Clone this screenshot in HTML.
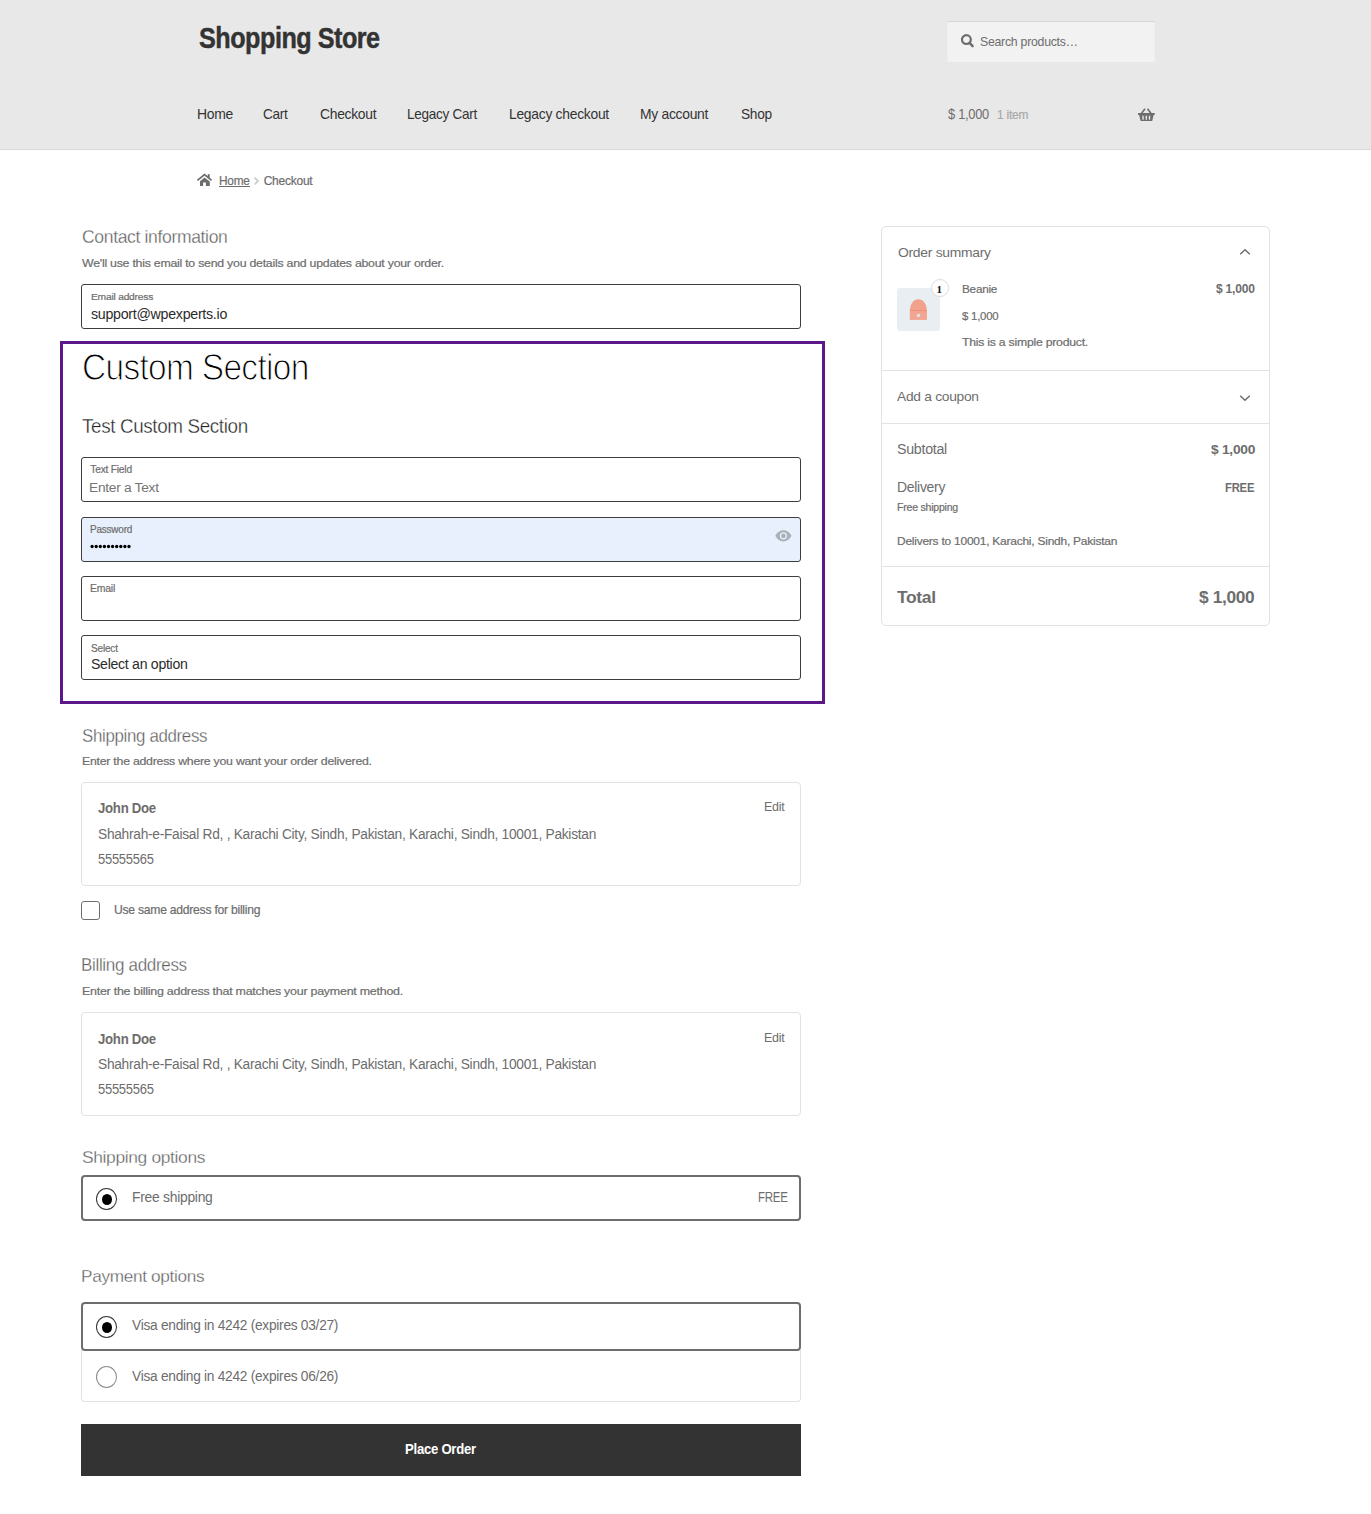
<!DOCTYPE html>
<html><head><meta charset="utf-8">
<style>
html,body{margin:0;padding:0;background:#fff;width:1371px;height:1514px;overflow:hidden;position:relative;font-family:"Liberation Sans",sans-serif;}
.t{position:absolute;white-space:nowrap;}
.b{position:absolute;box-sizing:border-box;}
svg{position:absolute;overflow:visible;}
</style></head><body>
<!-- header -->
<div class="b" style="left:0;top:0;width:1371px;height:150px;background:#e8e8e8;border-bottom:1px solid #dadada;"></div>
<div class="b" style="left:947px;top:21px;width:208px;height:41px;background:#f2f2f2;box-shadow:inset 0 1px 1px rgba(0,0,0,.12);"></div>
<!-- search icon -->
<svg style="left:960px;top:34px" width="15" height="15" viewBox="0 0 15 15"><circle cx="6.4" cy="5.6" r="4.4" fill="none" stroke="#6d6d6d" stroke-width="2.2"/><line x1="9.6" y1="8.9" x2="12.6" y2="12.1" stroke="#6d6d6d" stroke-width="2.5" stroke-linecap="round"/></svg>
<!-- basket icon -->
<svg style="left:1132px;top:102px" width="28" height="24" viewBox="0 0 28 24"><rect x="6.1" y="11" width="16.6" height="2" fill="#6d6d6d"/><path d="M7.1 12.9H21.6L20.2 18.9H8.6Z" fill="#6d6d6d"/><path d="M9.6 11.2L13 6.8M18.9 11.2L15.5 6.8" stroke="#6d6d6d" stroke-width="1.6" fill="none"/><rect x="10.3" y="13.7" width="1.4" height="4" fill="#e8e8e8"/><rect x="13.6" y="13.7" width="1.4" height="4" fill="#e8e8e8"/><rect x="16.8" y="13.7" width="1.4" height="4" fill="#e8e8e8"/></svg>
<!-- breadcrumb home icon -->
<svg style="left:194px;top:170px" width="24" height="20" viewBox="0 0 24 20"><path d="M3.4 10.4L10.5 4.5 17.6 10.4" stroke="#6d6d6d" stroke-width="1.7" fill="none"/><rect x="13.7" y="4.2" width="2" height="3.6" fill="#6d6d6d"/><path d="M6 11.2L10.5 7.6 15.8 11.4V15.9H11.9V12.6H9.1V15.9H6Z" fill="#6d6d6d"/></svg>
<div class="b" style="left:218.6px;top:186px;width:31.2px;height:1px;background:#6d6d6d;"></div>
<svg style="left:253px;top:176px" width="7" height="10" viewBox="0 0 7 10"><path d="M1.5 1.5L5 5 1.5 8.5" stroke="#c8c8c8" stroke-width="1.6" fill="none"/></svg>

<!-- contact email input -->
<div class="b" style="left:81px;top:284px;width:720px;height:45px;border:1px solid #3d3d3d;border-radius:3px;"></div>
<!-- custom section -->
<div class="b" style="left:60px;top:341px;width:765px;height:363px;border:3px solid #5c1888;"></div>
<div class="b" style="left:81px;top:457px;width:720px;height:45px;border:1px solid #3d3d3d;border-radius:3px;"></div>
<div class="b" style="left:81px;top:517px;width:720px;height:45px;border:1px solid #3d3d3d;border-radius:3px;background:#e8f0fe;"></div>
<div class="b" style="left:81px;top:576px;width:720px;height:45px;border:1px solid #3d3d3d;border-radius:3px;"></div>
<div class="b" style="left:81px;top:635px;width:720px;height:45px;border:1px solid #3d3d3d;border-radius:3px;"></div>
<!-- password dots -->
<svg style="left:90px;top:544px" width="42" height="5" viewBox="0 0 42 5">
<circle cx="2.1" cy="2.5" r="1.65" fill="#000"/><circle cx="6.2" cy="2.5" r="1.65" fill="#000"/><circle cx="10.3" cy="2.5" r="1.65" fill="#000"/><circle cx="14.4" cy="2.5" r="1.65" fill="#000"/><circle cx="18.5" cy="2.5" r="1.65" fill="#000"/><circle cx="22.6" cy="2.5" r="1.65" fill="#000"/><circle cx="26.7" cy="2.5" r="1.65" fill="#000"/><circle cx="30.8" cy="2.5" r="1.65" fill="#000"/><circle cx="34.9" cy="2.5" r="1.65" fill="#000"/><circle cx="39" cy="2.5" r="1.65" fill="#000"/></svg>
<!-- eye icon -->
<svg style="left:775px;top:530px" width="17" height="12" viewBox="0 0 17 12"><path d="M8.4 0.3C4.6 0.3 1.6 3 0.3 5.8c1.3 2.9 4.3 5.6 8.1 5.6s6.8-2.7 8.1-5.6C15.2 3 12.2 0.3 8.4 0.3z" fill="#aab1b8"/><circle cx="8.4" cy="5.8" r="3.6" fill="#e8f0fe"/><circle cx="8.4" cy="5.9" r="2.3" fill="#aab1b8"/></svg>

<!-- sidebar card -->
<div class="b" style="left:881px;top:226px;width:389px;height:400px;border:1px solid #e2e2e2;border-radius:5px;"></div>
<div class="b" style="left:882px;top:370px;width:387px;height:1px;background:#e2e2e2;"></div>
<div class="b" style="left:882px;top:423px;width:387px;height:1px;background:#e2e2e2;"></div>
<div class="b" style="left:882px;top:566px;width:387px;height:1px;background:#e2e2e2;"></div>
<svg style="left:1239px;top:248px" width="12" height="8" viewBox="0 0 12 8"><path d="M1.2 6.2L6 1.8l4.8 4.4" stroke="#6d6d6d" stroke-width="1.5" fill="none"/></svg>
<svg style="left:1239px;top:394px" width="12" height="8" viewBox="0 0 12 8"><path d="M1.2 1.8L6 6.2l4.8-4.4" stroke="#6d6d6d" stroke-width="1.5" fill="none"/></svg>
<div class="b" style="left:897px;top:288px;width:43px;height:43px;background:#e9eef3;border-radius:3px;"></div>
<!-- hat -->
<svg style="left:909px;top:299px" width="19" height="22" viewBox="0 0 19 22"><path d="M1 11.5C1 5 4.5 0.3 9.3 0.3S17.8 5 17.8 11.5z" fill="#f2a18c"/><rect x="0.8" y="11.3" width="17.2" height="9.6" fill="#f2a590"/><line x1="1" y1="11.6" x2="17.8" y2="11.6" stroke="#e8876f" stroke-width="0.8"/><rect x="7.9" y="14.9" width="3.2" height="3" fill="#e0e0e0"/></svg>
<div class="b" style="left:931px;top:279px;width:18px;height:18px;border-radius:50%;background:#fff;border:1px solid #dcdcdc;"></div>
<div class="t" style="left:936.6px;top:281.5px;font-size:11px;line-height:14px;font-weight:700;color:#111;font-family:'Liberation Serif',serif;">1</div>

<!-- shipping address -->
<div class="b" style="left:81px;top:782px;width:720px;height:104px;border:1px solid #e2e2e2;border-radius:4px;"></div>
<div class="b" style="left:81px;top:901px;width:19px;height:19px;border:1px solid #6d6d6d;border-radius:3px;"></div>
<div class="b" style="left:81px;top:1012px;width:720px;height:104px;border:1px solid #e2e2e2;border-radius:4px;"></div>
<!-- shipping options -->
<div class="b" style="left:81px;top:1175px;width:720px;height:46px;border:2px solid #6d6d6d;border-radius:4px;"></div>
<div class="b" style="left:96px;top:1188px;width:21px;height:22px;border:1px solid #333;border-radius:50%;"></div>
<div class="b" style="left:101.5px;top:1194px;width:10.5px;height:11px;background:#000;border-radius:50%;"></div>
<!-- payment -->
<div class="b" style="left:81px;top:1350px;width:720px;height:52px;border:1px solid #e2e2e2;border-top:none;border-radius:0 0 4px 4px;"></div>
<div class="b" style="left:81px;top:1301.5px;width:720px;height:49px;border:2px solid #6d6d6d;border-radius:4px;"></div>
<div class="b" style="left:96px;top:1316px;width:21px;height:22px;border:1px solid #333;border-radius:50%;"></div>
<div class="b" style="left:101.5px;top:1322px;width:10.5px;height:11px;background:#000;border-radius:50%;"></div>
<div class="b" style="left:96px;top:1366px;width:21px;height:22px;border:1px solid #8a8a8a;border-radius:50%;"></div>
<!-- button -->
<div class="b" style="left:81px;top:1424px;width:720px;height:52px;background:#333;"></div>

<div class="t" style="left:198.50px;top:20.00px;font-size:29px;line-height:36px;letter-spacing:-0.580px;font-weight:700;color:#333;transform:scaleX(0.8693);transform-origin:0 0;-webkit-text-stroke:0.45px #333;">Shopping Store</div>
<div class="t" style="left:196.74px;top:105.00px;font-size:14.5px;line-height:18px;letter-spacing:-0.290px;font-weight:400;color:#333;transform:scaleX(0.9607);transform-origin:0 0;">Home</div>
<div class="t" style="left:262.60px;top:105.00px;font-size:14.5px;line-height:18px;letter-spacing:-0.290px;font-weight:400;color:#333;transform:scaleX(0.9361);transform-origin:0 0;">Cart</div>
<div class="t" style="left:319.50px;top:105.00px;font-size:14.5px;line-height:18px;letter-spacing:-0.290px;font-weight:400;color:#333;transform:scaleX(0.9544);transform-origin:0 0;">Checkout</div>
<div class="t" style="left:407.47px;top:105.00px;font-size:14.5px;line-height:18px;letter-spacing:-0.290px;font-weight:400;color:#333;transform:scaleX(0.9333);transform-origin:0 0;">Legacy Cart</div>
<div class="t" style="left:509.14px;top:105.00px;font-size:14.5px;line-height:18px;letter-spacing:-0.290px;font-weight:400;color:#333;transform:scaleX(0.9563);transform-origin:0 0;">Legacy checkout</div>
<div class="t" style="left:640.44px;top:105.00px;font-size:14.5px;line-height:18px;letter-spacing:-0.290px;font-weight:400;color:#333;transform:scaleX(0.9560);transform-origin:0 0;">My account</div>
<div class="t" style="left:741.20px;top:105.00px;font-size:14.5px;line-height:18px;letter-spacing:-0.290px;font-weight:400;color:#333;transform:scaleX(0.9444);transform-origin:0 0;">Shop</div>
<div class="t" style="left:947.50px;top:105.00px;font-size:14.5px;line-height:18px;letter-spacing:-0.290px;font-weight:400;color:#6d6d6d;transform:scaleX(0.8846);transform-origin:0 0;">$ 1,000</div>
<div class="t" style="left:997.00px;top:108.00px;font-size:12px;line-height:15px;letter-spacing:-0.240px;font-weight:400;color:#a8a8a8;transform:scaleX(0.9974);transform-origin:0 0;-webkit-text-stroke:0.2px #a8a8a8;">1 item</div>
<div class="t" style="left:980.00px;top:34.00px;font-size:13px;line-height:16px;letter-spacing:-0.260px;font-weight:400;color:#6d6d6d;transform:scaleX(0.9439);transform-origin:0 0;">Search products…</div>
<div class="t" style="left:218.60px;top:174.00px;font-size:12px;line-height:15px;letter-spacing:-0.240px;font-weight:400;color:#6d6d6d;transform:scaleX(0.9868);transform-origin:0 0;-webkit-text-stroke:0.2px #6d6d6d;">Home</div>
<div class="t" style="left:263.70px;top:174.00px;font-size:12px;line-height:15px;letter-spacing:-0.240px;font-weight:400;color:#6d6d6d;-webkit-text-stroke:0.2px #6d6d6d;">Checkout</div>
<div class="t" style="left:82.00px;top:226.00px;font-size:17.7px;line-height:22px;letter-spacing:-0.354px;font-weight:400;color:#5e5e5e;transform:scaleX(0.9921);transform-origin:0 0;-webkit-text-stroke:0.3px #fff;">Contact information</div>
<div class="t" style="left:82.00px;top:256.00px;font-size:11.5px;line-height:14px;letter-spacing:-0.230px;font-weight:400;color:#6d6d6d;transform:scaleX(1.0725);transform-origin:0 0;-webkit-text-stroke:0.2px #6d6d6d;">We'll use this email to send you details and updates about your order.</div>
<div class="t" style="left:90.50px;top:291.00px;font-size:9.6px;line-height:12px;letter-spacing:-0.192px;font-weight:400;color:#6d6d6d;transform:scaleX(1.0650);transform-origin:0 0;-webkit-text-stroke:0.2px #6d6d6d;">Email address</div>
<div class="t" style="left:90.50px;top:305.00px;font-size:14px;line-height:18px;letter-spacing:-0.280px;font-weight:400;color:#2b2b2b;transform:scaleX(1.0157);transform-origin:0 0;">support@wpexperts.io</div>
<div class="t" style="left:81.97px;top:345.00px;font-size:36px;line-height:45px;letter-spacing:-0.720px;font-weight:400;color:#000;transform:scaleX(0.9287);transform-origin:0 0;-webkit-text-stroke:1.1px #fff;">Custom Section</div>
<div class="t" style="left:82.30px;top:415.00px;font-size:19.3px;line-height:24px;letter-spacing:-0.386px;font-weight:400;color:#222;transform:scaleX(0.9779);transform-origin:0 0;-webkit-text-stroke:0.35px #fff;">Test Custom Section</div>
<div class="t" style="left:90.30px;top:463.00px;font-size:10.2px;line-height:13px;letter-spacing:-0.204px;font-weight:400;color:#6d6d6d;-webkit-text-stroke:0.2px #6d6d6d;">Text Field</div>
<div class="t" style="left:89.30px;top:479.00px;font-size:13.7px;line-height:17px;letter-spacing:-0.274px;font-weight:400;color:#757575;transform:scaleX(1.0026);transform-origin:0 0;">Enter a Text</div>
<div class="t" style="left:90.30px;top:523.00px;font-size:10.2px;line-height:13px;letter-spacing:-0.204px;font-weight:400;color:#6d6d6d;transform:scaleX(0.9786);transform-origin:0 0;-webkit-text-stroke:0.2px #6d6d6d;">Password</div>
<div class="t" style="left:90.30px;top:582.00px;font-size:10.2px;line-height:13px;letter-spacing:-0.204px;font-weight:400;color:#6d6d6d;transform:scaleX(1.0248);transform-origin:0 0;-webkit-text-stroke:0.2px #6d6d6d;">Email</div>
<div class="t" style="left:91.20px;top:642.00px;font-size:10.2px;line-height:13px;letter-spacing:-0.204px;font-weight:400;color:#6d6d6d;transform:scaleX(0.9868);transform-origin:0 0;-webkit-text-stroke:0.2px #6d6d6d;">Select</div>
<div class="t" style="left:90.50px;top:655.00px;font-size:14px;line-height:18px;letter-spacing:-0.280px;font-weight:400;color:#2b2b2b;transform:scaleX(1.0061);transform-origin:0 0;">Select an option</div>
<div class="t" style="left:897.50px;top:244.00px;font-size:13.4px;line-height:17px;letter-spacing:-0.268px;font-weight:400;color:#6d6d6d;transform:scaleX(1.0356);transform-origin:0 0;">Order summary</div>
<div class="t" style="left:962.10px;top:282.00px;font-size:11.6px;line-height:14px;letter-spacing:-0.232px;font-weight:400;color:#6d6d6d;transform:scaleX(1.0118);transform-origin:0 0;-webkit-text-stroke:0.2px #6d6d6d;">Beanie</div>
<div class="t" style="left:1216.10px;top:281.00px;font-size:12.6px;line-height:16px;letter-spacing:-0.252px;font-weight:700;color:#6d6d6d;transform:scaleX(0.9604);transform-origin:0 0;">$ 1,000</div>
<div class="t" style="left:962.10px;top:309.00px;font-size:11.6px;line-height:14px;letter-spacing:-0.232px;font-weight:400;color:#6d6d6d;transform:scaleX(0.9826);transform-origin:0 0;-webkit-text-stroke:0.2px #6d6d6d;">$ 1,000</div>
<div class="t" style="left:962.10px;top:335.00px;font-size:11.6px;line-height:14px;letter-spacing:-0.232px;font-weight:400;color:#6d6d6d;transform:scaleX(1.0569);transform-origin:0 0;-webkit-text-stroke:0.2px #6d6d6d;">This is a simple product.</div>
<div class="t" style="left:897.20px;top:388.00px;font-size:13.5px;line-height:17px;letter-spacing:-0.270px;font-weight:400;color:#6d6d6d;transform:scaleX(1.0208);transform-origin:0 0;">Add a coupon</div>
<div class="t" style="left:897.20px;top:441.00px;font-size:13.8px;line-height:17px;letter-spacing:-0.276px;font-weight:400;color:#6d6d6d;transform:scaleX(1.0323);transform-origin:0 0;">Subtotal</div>
<div class="t" style="left:1210.70px;top:442.00px;font-size:13px;line-height:16px;letter-spacing:-0.260px;font-weight:700;color:#6d6d6d;transform:scaleX(1.0605);transform-origin:0 0;">$ 1,000</div>
<div class="t" style="left:896.89px;top:479.00px;font-size:13.8px;line-height:17px;letter-spacing:-0.276px;font-weight:400;color:#6d6d6d;transform:scaleX(1.0106);transform-origin:0 0;">Delivery</div>
<div class="t" style="left:1224.60px;top:480.00px;font-size:13px;line-height:16px;letter-spacing:-0.260px;font-weight:700;color:#6d6d6d;transform:scaleX(0.8679);transform-origin:0 0;">FREE</div>
<div class="t" style="left:897.20px;top:501.00px;font-size:10.3px;line-height:13px;letter-spacing:-0.206px;font-weight:400;color:#6d6d6d;transform:scaleX(1.0201);transform-origin:0 0;-webkit-text-stroke:0.2px #6d6d6d;">Free shipping</div>
<div class="t" style="left:897.20px;top:534.00px;font-size:11.6px;line-height:14px;letter-spacing:-0.232px;font-weight:400;color:#6d6d6d;transform:scaleX(1.0334);transform-origin:0 0;-webkit-text-stroke:0.2px #6d6d6d;">Delivers to 10001, Karachi, Sindh, Pakistan</div>
<div class="t" style="left:897.30px;top:587.00px;font-size:17px;line-height:21px;letter-spacing:-0.340px;font-weight:700;color:#6d6d6d;transform:scaleX(1.0278);transform-origin:0 0;">Total</div>
<div class="t" style="left:1199.30px;top:587.00px;font-size:17px;line-height:21px;letter-spacing:-0.340px;font-weight:700;color:#6d6d6d;transform:scaleX(1.0180);transform-origin:0 0;">$ 1,000</div>
<div class="t" style="left:82.10px;top:724.00px;font-size:18.6px;line-height:23px;letter-spacing:-0.372px;font-weight:400;color:#5e5e5e;transform:scaleX(0.9085);transform-origin:0 0;-webkit-text-stroke:0.3px #fff;">Shipping address</div>
<div class="t" style="left:82.00px;top:754.00px;font-size:11.5px;line-height:14px;letter-spacing:-0.230px;font-weight:400;color:#6d6d6d;transform:scaleX(1.0702);transform-origin:0 0;-webkit-text-stroke:0.2px #6d6d6d;">Enter the address where you want your order delivered.</div>
<div class="t" style="left:97.50px;top:799.00px;font-size:14px;line-height:18px;letter-spacing:-0.280px;font-weight:700;color:#6d6d6d;transform:scaleX(0.9414);transform-origin:0 0;">John Doe</div>
<div class="t" style="left:97.50px;top:825.00px;font-size:14px;line-height:18px;letter-spacing:-0.280px;font-weight:400;color:#6d6d6d;transform:scaleX(0.9814);transform-origin:0 0;">Shahrah-e-Faisal Rd, , Karachi City, Sindh, Pakistan, Karachi, Sindh, 10001, Pakistan</div>
<div class="t" style="left:97.50px;top:850.00px;font-size:14px;line-height:18px;letter-spacing:-0.280px;font-weight:400;color:#6d6d6d;transform:scaleX(0.9266);transform-origin:0 0;">55555565</div>
<div class="t" style="left:763.84px;top:799.00px;font-size:12.9px;line-height:16px;letter-spacing:-0.258px;font-weight:400;color:#6d6d6d;transform:scaleX(0.9637);transform-origin:0 0;">Edit</div>
<div class="t" style="left:113.70px;top:903.00px;font-size:11.9px;line-height:15px;letter-spacing:-0.238px;font-weight:400;color:#6d6d6d;transform:scaleX(1.0204);transform-origin:0 0;-webkit-text-stroke:0.2px #6d6d6d;">Use same address for billing</div>
<div class="t" style="left:81.38px;top:953.00px;font-size:18.6px;line-height:23px;letter-spacing:-0.372px;font-weight:400;color:#5e5e5e;transform:scaleX(0.9168);transform-origin:0 0;-webkit-text-stroke:0.3px #fff;">Billing address</div>
<div class="t" style="left:82.00px;top:984.00px;font-size:11.5px;line-height:14px;letter-spacing:-0.230px;font-weight:400;color:#6d6d6d;transform:scaleX(1.0827);transform-origin:0 0;-webkit-text-stroke:0.2px #6d6d6d;">Enter the billing address that matches your payment method.</div>
<div class="t" style="left:97.50px;top:1030.00px;font-size:14px;line-height:18px;letter-spacing:-0.280px;font-weight:700;color:#6d6d6d;transform:scaleX(0.9414);transform-origin:0 0;">John Doe</div>
<div class="t" style="left:97.50px;top:1055.00px;font-size:14px;line-height:18px;letter-spacing:-0.280px;font-weight:400;color:#6d6d6d;transform:scaleX(0.9814);transform-origin:0 0;">Shahrah-e-Faisal Rd, , Karachi City, Sindh, Pakistan, Karachi, Sindh, 10001, Pakistan</div>
<div class="t" style="left:97.50px;top:1080.00px;font-size:14px;line-height:18px;letter-spacing:-0.280px;font-weight:400;color:#6d6d6d;transform:scaleX(0.9266);transform-origin:0 0;">55555565</div>
<div class="t" style="left:763.83px;top:1030.00px;font-size:12.9px;line-height:16px;letter-spacing:-0.258px;font-weight:400;color:#6d6d6d;transform:scaleX(0.9685);transform-origin:0 0;">Edit</div>
<div class="t" style="left:82.10px;top:1147.00px;font-size:17px;line-height:21px;letter-spacing:-0.340px;font-weight:400;color:#5e5e5e;transform:scaleX(1.0233);transform-origin:0 0;-webkit-text-stroke:0.3px #fff;">Shipping options</div>
<div class="t" style="left:131.95px;top:1188.00px;font-size:14.7px;line-height:18px;letter-spacing:-0.294px;font-weight:400;color:#6d6d6d;transform:scaleX(0.9455);transform-origin:0 0;">Free shipping</div>
<div class="t" style="left:757.68px;top:1188.00px;font-size:14px;line-height:18px;letter-spacing:-0.280px;font-weight:400;color:#6d6d6d;transform:scaleX(0.8191);transform-origin:0 0;">FREE</div>
<div class="t" style="left:81.29px;top:1266.00px;font-size:17px;line-height:21px;letter-spacing:-0.340px;font-weight:400;color:#5e5e5e;transform:scaleX(1.0136);transform-origin:0 0;-webkit-text-stroke:0.3px #fff;">Payment options</div>
<div class="t" style="left:132.00px;top:1316.00px;font-size:14.7px;line-height:18px;letter-spacing:-0.294px;font-weight:400;color:#6d6d6d;transform:scaleX(0.9349);transform-origin:0 0;">Visa ending in 4242 (expires 03/27)</div>
<div class="t" style="left:132.00px;top:1367.00px;font-size:14.7px;line-height:18px;letter-spacing:-0.294px;font-weight:400;color:#6d6d6d;transform:scaleX(0.9349);transform-origin:0 0;">Visa ending in 4242 (expires 06/26)</div>
<div class="t" style="left:405.30px;top:1440.00px;font-size:14.7px;line-height:18px;letter-spacing:-0.294px;font-weight:700;color:#fff;transform:scaleX(0.8947);transform-origin:0 0;">Place Order</div>
</body></html>
